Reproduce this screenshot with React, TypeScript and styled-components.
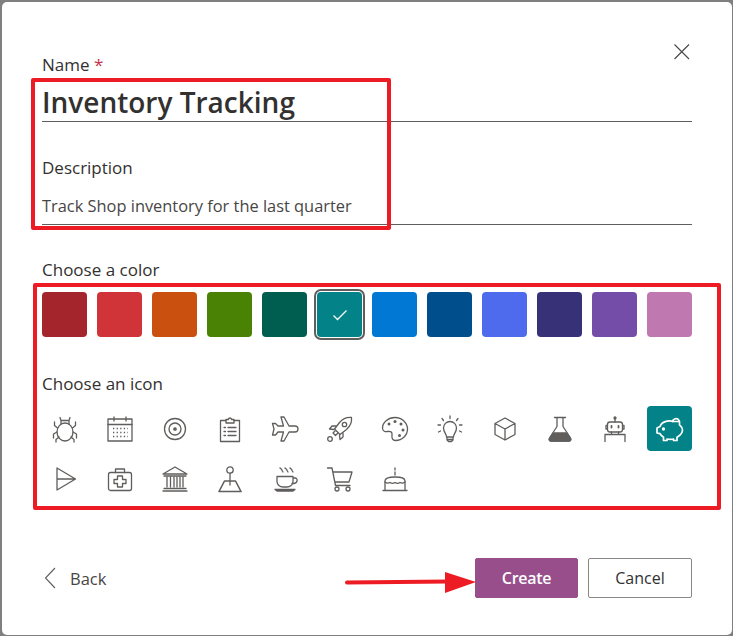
import React, { FC } from 'react';
import styled, { createGlobalStyle } from 'styled-components';

const GlobalStyle = createGlobalStyle`
  html, body {
    margin: 0;
    padding: 0;
    background: #7f7f7f;
  }
  body {
    font-family: "Open Sans", "Noto Sans", sans-serif;
  }
`;

const Frame = styled.div`
  width: 733px;
  height: 636px;
  padding: 2px 1px 1px 2px;
  box-sizing: border-box;
  overflow: hidden;
`;

const Dialog = styled.div`
  position: relative;
  box-sizing: border-box;
  width: 730px;
  height: 633px;
  padding: 52px 40px 0;
  background: #fff;
  border-radius: 5px;
  color: #323130;
`;

const Label = styled.div<{ $mt?: number }>`
  font-size: 17px;
  line-height: 22px;
  font-weight: 500;
  margin-top: ${p => p.$mt ?? 0}px;
`;

const Star = styled.span`
  color: #c4314b;
`;

const NameField = styled.div`
  height: 38px;
  margin-top: 1px;
  padding-top: 6px;
  border-bottom: 1px solid #605e5c;
  font-size: 28px;
  line-height: 39px;
  font-weight: 600;
`;

const DescField = styled.div`
  height: 33px;
  margin-top: 12px;
  border-bottom: 1px solid #605e5c;
  font-size: 16.4px;
  line-height: 30px;
  color: #484644;
`;

const Grid = styled.div<{ $mt: number }>`
  display: grid;
  grid-template-columns: repeat(12, 45px);
  grid-auto-rows: 45px;
  column-gap: 10px;
  row-gap: 5px;
  margin-top: ${p => p.$mt}px;
`;

const Swatch = styled.div<{ $color: string; $selected?: boolean }>`
  display: flex;
  align-items: center;
  justify-content: center;
  background: ${p => p.$color};
  border-radius: 4px;
  ${p => p.$selected && 'box-shadow: 0 0 0 1px #fff, 0 0 0 3px #605e5c;'}
`;

const IconCell = styled.div<{ $active?: boolean }>`
  display: flex;
  align-items: center;
  justify-content: center;
  border-radius: 4px;
  color: ${p => (p.$active ? '#fff' : '#605e5c')};
  background: ${p => (p.$active ? '#038387' : 'transparent')};
`;

const Footer = styled.div`
  display: flex;
  align-items: center;
  justify-content: space-between;
  margin-top: 57px;
`;

const BackLink = styled.div`
  display: flex;
  align-items: center;
  gap: 14px;
  padding-left: 2px;
  font-size: 16.5px;
  color: #484644;
`;

const Actions = styled.div`
  display: flex;
  gap: 10px;
`;

const Button = styled.div<{ $primary?: boolean }>`
  display: flex;
  align-items: center;
  justify-content: center;
  box-sizing: border-box;
  width: ${p => (p.$primary ? 103 : 104)}px;
  height: 40px;
  border-radius: 2px;
  font-size: 16px;
  letter-spacing: ${p => (p.$primary ? '-0.3px' : '0')};
  font-weight: ${p => (p.$primary ? 600 : 500)};
  background: ${p => (p.$primary ? '#974e8b' : '#fff')};
  color: ${p => (p.$primary ? '#fff' : '#323130')};
  border: 1px solid ${p => (p.$primary ? '#974e8b' : '#8a8886')};
`;

const CloseButton = styled.svg`
  position: absolute;
  top: 41px;
  right: 41px;
`;

const RedBox = styled.div<{ $l: number; $t: number; $w: number; $h: number }>`
  position: absolute;
  left: ${p => p.$l}px;
  top: ${p => p.$t}px;
  width: ${p => p.$w}px;
  height: ${p => p.$h}px;
  box-sizing: border-box;
  border: 4px solid #ed1c24;
  border-radius: 2px;
  pointer-events: none;
`;

const Arrow = styled.svg`
  position: absolute;
  left: 343px;
  top: 569px;
`;

const colors = [
  '#a4262c', '#d13438', '#ca5010', '#498205', '#005e50', '#038387',
  '#0078d4', '#004e8c', '#4f6bed', '#373277', '#744da9', '#bf78b0',
];

const IconSvg: FC<{ children: React.ReactNode }> = ({ children }) => (
  <svg
    width="28"
    height="28"
    viewBox="0 0 28 28"
    fill="none"
    stroke="currentColor"
    strokeWidth="1.3"
    strokeLinecap="round"
    strokeLinejoin="round"
  >
    {children}
  </svg>
);

const icons: React.ReactNode[] = [
  // bug
  <>
    <ellipse cx="14" cy="17" rx="8" ry="9" />
    <path d="M10 9V5.500h8V9M10 5.500 9 2.500M18 5.500l1-3M6.500 13 3.500 10.500V7M21.500 13l3-2.500V7M6 17l-3.500 2v4M22 17l3.500 2v4M8 22l-3 2.500V27M20 22l3 2.500V27" />
  </>,
  // calendar
  <>
    <rect x="2" y="4" width="24" height="22" />
    <path d="M2 9.500h24M8 2v4M20 2v4" />
    <path strokeDasharray="1.300 2.300" strokeWidth="1.400" d="M7 13.500h15M7 17.500h15M7 21.500h15" strokeLinecap="butt" />
  </>,
  // target
  <>
    <circle cx="14" cy="14" r="10.500" />
    <circle cx="14" cy="14" r="6" />
    <circle cx="14" cy="14" r="1.200" fill="currentColor" />
  </>,
  // clipboard
  <>
    <path d="M10 5.500H4.500v21h19v-21H18" />
    <path d="M10 8V4.500h2.500a1.500 1.500 0 0 1 3 0H18V8z" />
    <path d="M8 12.500h1.500M12 12.500h8M8 16.500h1.500M12 16.500h8M8 20.500h1.500M12 20.500h8" />
  </>,
  // plane
  <path d="M10 2h3l5 9h6c2 0 3 1.500 3 3s-1 3-3 3h-6l-5 9h-3l2.500-9H7l-2.500 3H1.500L3 14 1.500 8.500h3L7 11h5.500z" />,
  // rocket
  <>
    <path d="M25.500 2.500c-5-.5-9 1.500-12 5l-5 6.500 5.500 5.500 6.500-5c3.500-3 5.500-7 5-12z" />
    <circle cx="18.500" cy="9.500" r="2.200" />
    <path d="M10 11H6l-2.500 3 4.500.5M17 18v4l-3 2.500-.5-4.500M9 16l-2 2 2.500 2.500 2-2" />
    <circle cx="4" cy="24" r="2.300" />
  </>,
  // palette
  <>
    <path d="M14 2.500C7 2.500 1.500 7.500 1.500 13c0 3.500 3 4 5 3.500 3-.7 5 .5 4.500 3.500-.5 3 .5 5.500 3.500 5.500 7 0 12-5.500 12-11.500S21 2.500 14 2.500z" />
    <g fill="currentColor" stroke="none">
      <circle cx="8" cy="9" r="1.500" />
      <circle cx="14" cy="6.500" r="1.500" />
      <circle cx="20" cy="9" r="1.500" />
      <circle cx="22" cy="15" r="1.500" />
      <circle cx="18.500" cy="20.500" r="1.500" />
    </g>
  </>,
  // bulb
  <>
    <path d="M10.500 22c0-3-3-5-3-9a6.500 6.500 0 0 1 13 0c0 4-3 6-3 9zM11 22v3l1.500 1.500h3L17 25v-3M11 24.500h6" />
    <path d="M14 1v2.500M6 3.500l1.500 2M22 3.500l-1.500 2M2 10h2.500M23.500 10H26M2.500 17l2-1M25.500 17l-2-1" />
  </>,
  // box
  <path d="M14 3 24 8.500v11L14 25 4 19.500v-11zM4 8.500 14 14l10-5.500M14 14v11" />,
  // flask
  <>
    <path d="M8.500 2.500h11M11 3v8.500L3.500 23c-1 1.500 0 3 1.500 3h18c1.500 0 2.500-1.500 1.500-3L17 11.500V3" />
    <path fill="currentColor" d="M7 18h14l3.500 5.500c.5 1.200 0 2.500-1.500 2.500H5c-1.500 0-2-1.300-1.500-2.500z" />
  </>,
  // robot
  <>
    <rect x="6.500" y="7" width="15" height="10" rx="2.500" />
    <path d="M14 4v3M6.500 10.500H5v3.500h1.500M21.500 10.500H23v3.500h-1.500M10.500 17v2.500M17.500 17v2.500M4 26.500v-7h20v7" />
    <circle cx="14" cy="3" r="1" fill="currentColor" />
    <path d="M10.500 11v1.500M17.500 11v1.500" strokeWidth="1.800" />
  </>,
  // piggy bank
  <g strokeWidth="1.700">
    <path d="M17 6.500c-2-.6-4-.7-6-.3C8 6.800 5 8.800 4 11.500L1 13v5l3 .7c.8 1.600 2 2.800 3.500 3.600V25.500H11V24c2.500.4 4.500.4 6.500 0v1.500H21v-3.200c3-1.800 5.500-4 5.500-7.300 0-2.500-1.500-4-3-5.200V6.500z" />
    <path d="M16.500 6.500a3.500 3.500 0 0 1 6.500-1" />
    <circle cx="7.500" cy="14" r=".8" fill="currentColor" />
  </g>,
  // send triangle
  <path d="M6 3 24.500 14 6 25zM6 14h18.500" />,
  // first aid kit
  <>
    <rect x="2.500" y="7.500" width="23" height="18" rx="2" />
    <path d="M9.500 7.500V4h9v3.500" />
    <path d="M11.500 11h5v3.500H20v4h-3.500V22h-5v-3.500H8v-4h3.500z" />
  </>,
  // bank
  <>
    <path d="M14 2 26 9H2zM3 11h22M3 23.500h22M2 26h24" />
    <path d="M6 12v10M9.500 12v10M13 12v10M16 12v10M19 12v10M22 12v10" />
  </>,
  // pin on plinth
  <>
    <circle cx="14" cy="5" r="3.200" />
    <path d="M14 8.200V20" />
    <path d="M8.500 16h11L25 26.500H3z" strokeWidth="1.600" />
  </>,
  // coffee
  <>
    <path d="M6 11.500h16v5c0 3.500-3 5.500-6 5.500h-4c-3 0-6-2-6-5.500zM22 13h2c3 0 3 5-1 5.500h-2M4 24.500h20l-2 1.500H6z" />
    <path d="M9 3c1 1 2 1 2 2.500l1 1.500M14 3c1 1 2 1 2 2.500l1 1.500M19 3c1 1 2 1 2 2.500l1 1.500" />
  </>,
  // cart
  <>
    <path d="M1.500 3H6l3.500 17.500H24M7 7h19l-3 10H9" />
    <circle cx="11" cy="24" r="2" />
    <circle cx="22" cy="24" r="2" />
  </>,
  // cake
  <>
    <path d="M14 3v2M14 7v3" />
    <path d="M4 25V16c0-3 3-4 10-4s10 1 10 4v9M2 25.500h24" />
    <path d="M4 17c2 1.500 3 1.500 5 .5 2 1.500 3 1.500 5 0 2 1.500 3 1.500 5 0 2 1 3 1 5-.5" />
  </>,
];

const App: FC = () => (
  <>
    <GlobalStyle />
    <Frame>
      <Dialog>
        <CloseButton width="18" height="18" viewBox="0 0 18 18" stroke="#484644" strokeWidth="1.100">
          <path d="M1.500 1.500 16 16M16 1.500 1.500 16" />
        </CloseButton>

        <Label>
          Name <Star>*</Star>
        </Label>
        <NameField>Inventory Tracking</NameField>

        <Label $mt={35}>Description</Label>
        <DescField>Track Shop inventory for the last quarter</DescField>

        <Label $mt={34}>Choose a color</Label>
        <Grid $mt={11}>
          {colors.map((c, i) => (
            <Swatch key={c} $color={c} $selected={i === 5}>
              {i === 5 && (
                <svg width="16" height="12" viewBox="0 0 16 12" fill="none" stroke="#fff" strokeWidth="1.300">
                  <path d="M1.500 6.500 5.500 10.500 14.500 1.500" />
                </svg>
              )}
            </Swatch>
          ))}
        </Grid>

        <Label $mt={36}>Choose an icon</Label>
        <Grid $mt={11}>
          {icons.map((icon, i) => (
            <IconCell key={i} $active={i === 11}>
              <IconSvg>{icon}</IconSvg>
            </IconCell>
          ))}
        </Grid>

        <Footer>
          <BackLink>
            <svg width="12" height="22" viewBox="0 0 12 22" fill="none" stroke="#605e5c" strokeWidth="1.100">
              <path d="M11 1 1.500 11 11 21" />
            </svg>
            Back
          </BackLink>
          <Actions>
            <Button $primary>Create</Button>
            <Button>Cancel</Button>
          </Actions>
        </Footer>

        <RedBox $l={29} $t={76} $w={360} $h={152} />
        <RedBox $l={31} $t={281} $w={688} $h={227} />
        <Arrow width="132" height="24" viewBox="0 0 132 24">
          <path d="M2 11.500 104 10.500" stroke="#ed1c24" strokeWidth="4" strokeLinecap="round" />
          <path d="M100 1 131 11 100 22z" fill="#ed1c24" />
        </Arrow>
      </Dialog>
    </Frame>
  </>
);

export default App;
